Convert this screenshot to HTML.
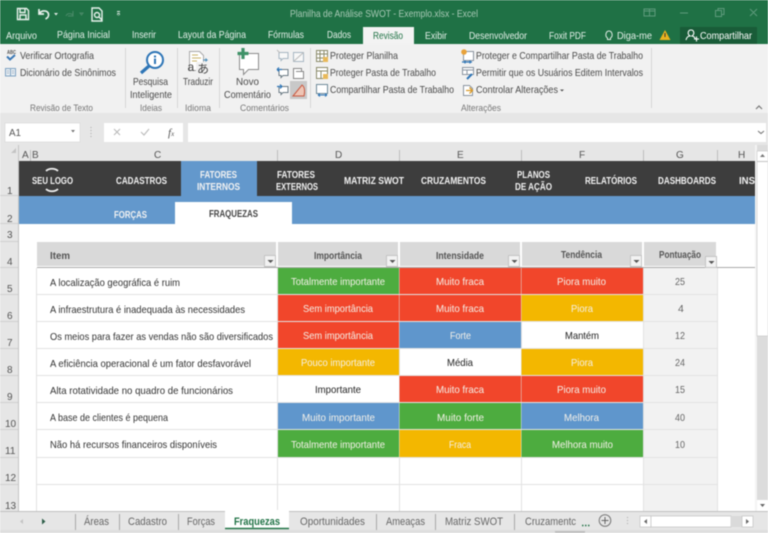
<!DOCTYPE html>
<html lang="pt"><head><meta charset="utf-8"><title>Planilha de Análise SWOT</title>
<style>
html,body{margin:0;padding:0;background:#fff;width:768px;height:533px;overflow:hidden}
svg{display:block;filter:blur(.4px)}
text{font-family:"Liberation Sans",sans-serif;font-size:10px;fill:#444}
.tb text{fill:#e3efe8;font-size:10.5px}
.rb text{fill:#4a4a4a;font-size:10.5px}
.gl text{fill:#777;font-size:9.5px}
.ch text{fill:#555;font-size:10px}
.nv text{fill:#f2f2f2;font-weight:bold;font-size:10px}
.hd text{fill:#555;font-weight:bold;font-size:10px}
.it text{fill:#333;font-size:10.5px}
.w text{fill:#f4f0e8;font-size:10.5px}
.k text{fill:#222;font-size:10.5px}
.n text{fill:#666;font-size:10.5px}
.st text{fill:#666;font-size:11px}
</style></head><body>
<svg xmlns="http://www.w3.org/2000/svg" width="768" height="533" viewBox="0 0 768 533">
<!-- title bar -->
<rect width="768" height="44" fill="#1f7145"/>
<rect x="363" y="27" width="51" height="18" fill="#f3f3f3"/>
<rect x="680" y="27" width="77" height="17" fill="#195c38"/>
<g fill="none" stroke="#e8f1ec" stroke-width="1.4">
<path d="M17.5 8.5h9l2 2v9h-11z"/><path d="M20 9v3.5h5V9M20 19v-4h6v4"/>
<path d="M39 9v5h5M39.500 13.500c2-3.500 8-3.500 9 .5 .5 2-1 4-3 5" stroke-width="1.700"/>
<path d="M92 8h7l3 3v10h-10z"/><circle cx="97" cy="15" r="2.500"/><path d="M99 17l3 3"/>
</g>
<path d="M54 13h4l-2 2.500zM117 11h3v1h-3zM117 14h3v1h-3zM117 13l1.500 3 1.500-3z" fill="#dfeae4"/>
<path d="M66 16c1-3 5-3 7-1M73 11v5h-5M80 13h3l-1.500 2z" fill="none" stroke="#4a8a68" stroke-width="1"/>
<g class="tb">
<text x="290" y="17" textLength="188" lengthAdjust="spacingAndGlyphs" style="fill:#a9c9b6">Planilha de Análise SWOT - Exemplo.xlsx - Excel</text>
<text x="6" y="39" textLength="31" lengthAdjust="spacingAndGlyphs">Arquivo</text>
<text x="57" y="38" textLength="53" lengthAdjust="spacingAndGlyphs">Página Inicial</text>
<text x="132" y="38" textLength="24" lengthAdjust="spacingAndGlyphs">Inserir</text>
<text x="178" y="38" textLength="68" lengthAdjust="spacingAndGlyphs">Layout da Página</text>
<text x="268" y="38" textLength="36" lengthAdjust="spacingAndGlyphs">Fórmulas</text>
<text x="327" y="38" textLength="24" lengthAdjust="spacingAndGlyphs">Dados</text>
<text x="373" y="39" textLength="30" lengthAdjust="spacingAndGlyphs" style="fill:#217346">Revisão</text>
<text x="425" y="39" textLength="22" lengthAdjust="spacingAndGlyphs">Exibir</text>
<text x="469" y="39" textLength="58" lengthAdjust="spacingAndGlyphs">Desenvolvedor</text>
<text x="549" y="39" textLength="37" lengthAdjust="spacingAndGlyphs">Foxit PDF</text>
<text x="617" y="39" textLength="35" lengthAdjust="spacingAndGlyphs">Diga-me</text>
<text x="700" y="39" textLength="52" lengthAdjust="spacingAndGlyphs" style="fill:#fff">Compartilhar</text>
</g>
<path d="M607.500 39.500v-1.500c-3-2-1.500-7 1.500-7s4.500 5 1.500 7v1.500z" fill="none" stroke="#dfeae4"/>
<path d="M665 30l5.500 10h-11z" fill="#eab21e"/><rect x="664.500" y="33" width="1" height="4" fill="#333"/>
<path d="M686 40c1-4 3-4 4-4-3-2-2-6 1-6s4 4 1 6c2 .5 3 1.500 3 3M694 39h5M696.500 36.500v5" fill="none" stroke="#fff" stroke-width="1.100"/>
<g fill="none" stroke="#5e9a7c"><rect x="644" y="9" width="11" height="7"/><path d="M649.500 9v7M644 11h11M680 13h8M715.500 10.500h6v6h-6zM718 10.500v-2h6v6h-2M750 9l7 7M757 9l-7 7"/></g>
<!-- ribbon -->
<rect y="44" width="768" height="70" fill="#f1f1f1"/>
<rect y="113" width="768" height="32" fill="#e6e6e6"/>
<path d="M125.500 48v60M177.500 48v60M219.500 48v60M310.500 48v60M651.500 48v60" stroke="#d6d6d6"/>
<g class="rb">
<text x="20" y="59" textLength="74" lengthAdjust="spacingAndGlyphs">Verificar Ortografia</text>
<text x="20" y="76" textLength="96" lengthAdjust="spacingAndGlyphs">Dicionário de Sinônimos</text>
<text x="133" y="85" textLength="35" lengthAdjust="spacingAndGlyphs">Pesquisa</text>
<text x="130" y="98" textLength="42" lengthAdjust="spacingAndGlyphs">Inteligente</text>
<text x="183" y="85" textLength="30" lengthAdjust="spacingAndGlyphs">Traduzir</text>
<text x="236" y="85" textLength="23" lengthAdjust="spacingAndGlyphs">Novo</text>
<text x="224" y="98" textLength="47" lengthAdjust="spacingAndGlyphs">Comentário</text>
<text x="330" y="59" textLength="68" lengthAdjust="spacingAndGlyphs">Proteger Planilha</text>
<text x="330" y="76" textLength="106" lengthAdjust="spacingAndGlyphs">Proteger Pasta de Trabalho</text>
<text x="330" y="93" textLength="124" lengthAdjust="spacingAndGlyphs">Compartilhar Pasta de Trabalho</text>
<text x="476" y="59" textLength="167" lengthAdjust="spacingAndGlyphs">Proteger e Compartilhar Pasta de Trabalho</text>
<text x="476" y="76" textLength="167" lengthAdjust="spacingAndGlyphs">Permitir que os Usuários Editem Intervalos</text>
<text x="476" y="93" textLength="82" lengthAdjust="spacingAndGlyphs">Controlar Alterações</text>
</g>
<path d="M560 89.500h4l-2 2z" fill="#555"/>
<g class="gl">
<text x="30" y="111" textLength="63" lengthAdjust="spacingAndGlyphs">Revisão de Texto</text>
<text x="140" y="111" textLength="22" lengthAdjust="spacingAndGlyphs">Ideias</text>
<text x="185" y="111" textLength="26" lengthAdjust="spacingAndGlyphs">Idioma</text>
<text x="240" y="111" textLength="49" lengthAdjust="spacingAndGlyphs">Comentários</text>
<text x="461" y="111" textLength="40" lengthAdjust="spacingAndGlyphs">Alterações</text>
</g>
<path d="M756 109l3-3 3 3" fill="none" stroke="#777" stroke-width="1.200"/>
<!-- ribbon icons -->
<text x="7" y="54" textLength="9" lengthAdjust="spacingAndGlyphs" style="font-size:5px;font-weight:bold;fill:#555">ABC</text>
<path d="M7 56.500l3 3 5-4.500" fill="none" stroke="#3b78b5" stroke-width="2"/>
<rect x="5.500" y="68.500" width="10" height="7.500" fill="#e8eef3" stroke="#7fa3c2"/><path d="M10.500 69v7" stroke="#7fa3c2"/><path d="M7 71h2M7 73h2M12 71h2M12 73h2" stroke="#a5b8c8"/>
<circle cx="155" cy="60" r="8" fill="#fff" stroke="#2e75b6" stroke-width="2"/><path d="M149 66l-8 7" stroke="#2e75b6" stroke-width="3.200"/>
<rect x="154" y="58.500" width="2" height="5.500" fill="#2e75b6"/><rect x="154" y="55.500" width="2" height="2" fill="#2e75b6"/>
<path d="M189.500 51.500h10l4 4v15h-14z" fill="#fff" stroke="#a8a8a8"/><path d="M192 55h6M192 58h9M192 61h5" stroke="#c9b26a"/>
<rect x="196" y="62" width="15" height="12" fill="#f1f1f1"/>
<text x="187.500" y="71" style="font-size:12px;fill:#444">a</text><text x="197" y="73" style="font-family:'Noto Sans CJK JP','Liberation Sans',sans-serif;font-size:12px;fill:#444">あ</text>
<path d="M203 60h4l-1.500-1.500M207 60l-1.500 1.500" fill="none" stroke="#4a8db8"/>
<path d="M239.500 53.500h19v16h-10l-5 5v-5h-4z" fill="#fff" stroke="#8c8c8c"/>
<path d="M243 48v11M237.500 53.500h11" stroke="#3f9268" stroke-width="3.200"/>
<g fill="#f8f8f8" stroke="#a6b6c2" stroke-width="1">
<path d="M279 52.500h9v6h-5l-2 2v-2h-2z"/><path d="M293.500 52.500h10v9h-10z"/>
</g>
<path d="M277 50l3 3M293.500 61.500l10-9" stroke="#bbb" fill="none"/>
<path d="M279 69.500h9v6h-5l-2 2v-2h-2z" fill="#fff" stroke="#6c7b85"/><path d="M277 69.500h5M277 69.500l2-2M277 69.500l2 2" stroke="#2e75b6" fill="none" stroke-width="1.200"/>
<path d="M293.500 68.500h8v3h2v7h-10z" fill="#fff" stroke="#888"/><path d="M296 71.500h7" stroke="#888"/>
<path d="M279 86.500h9v6h-5l-2 2v-2h-2z" fill="#fff" stroke="#6c7b85"/><path d="M277 86.500h5M282 86.500l-2-2M282 86.500l-2 2" stroke="#2e75b6" fill="none" stroke-width="1.200"/>
<rect x="290" y="81" width="17" height="18" fill="#c8c8c8"/>
<path d="M293 96l9-11c3 2 3 7 2 11z" fill="#eec5b5" stroke="#c85a42"/>
<g fill="#fff" stroke="#8a8a6a">
<rect x="316.500" y="50.500" width="11" height="11"/><path d="M320 51v10M324 51v10M317 54h10M317 58h10" fill="none"/>
<rect x="316.500" y="67.500" width="11" height="11"/><path d="M317 71h10M321 71v7" fill="none"/>
<rect x="316.500" y="84.500" width="11" height="9" stroke="#6f8a9a"/>
</g>
<rect x="323" y="57" width="5" height="5" fill="#e8b95a"/><rect x="323" y="74" width="5" height="5" fill="#e8b95a"/>
<path d="M318 95h9M318 95l2-1.500M318 95l2 1.500M327 95l-2-1.500M327 95l-2 1.500" stroke="#2e75b6" fill="none"/>
<rect x="463.500" y="51.500" width="10" height="9" fill="#fff" stroke="#8a94a0"/><circle cx="464" cy="52" r="2.800" fill="#e8a23a"/><path d="M462 62h10M465 60.500v3M470 60.500v3" stroke="#2e75b6" stroke-width="1.300"/>
<rect x="462.500" y="67.500" width="11" height="7" fill="#fff" stroke="#8a94a0"/><path d="M463 70h10M467 70v5" stroke="#8a94a0"/><path d="M467 79l5-5" stroke="#2e75b6" stroke-width="2"/>
<path d="M463.500 85.500h6l3 3v7h-9z" fill="#fff" stroke="#8a94a0"/><path d="M466 90.500h6M469.500 87.500l3 3-3 3" fill="none" stroke="#d99a2a" stroke-width="1.300"/>
<!-- formula bar -->
<rect x="5" y="123" width="75" height="19" fill="#fff" stroke="#d0d0d0" stroke-width=".5"/>
<text x="9" y="136" textLength="12" lengthAdjust="spacingAndGlyphs" style="fill:#555;font-size:10.500px">A1</text>
<path d="M71 130h4l-2 2.500z" fill="#777"/>
<path d="M91 127v1M91 130v1M91 133v1M91 136v1" stroke="#aaa"/>
<rect x="104" y="123" width="79" height="19" fill="#fff"/><rect x="188" y="123" width="578" height="19" fill="#fff"/>
<path d="M114 129l6 6M120 129l-6 6" stroke="#bbb" stroke-width="1.100"/><path d="M141 132l3 3 5-6" stroke="#bbb" stroke-width="1.100" fill="none"/>
<text x="168" y="136" style="font-family:'Liberation Serif',serif;font-style:italic;font-size:11px;fill:#555">f<tspan font-size="7">x</tspan></text>
<path d="M758 131l3 2.500 3-2.500" fill="none" stroke="#777" stroke-width="1.100"/>
<!-- sheet -->
<rect y="145" width="768" height="16" fill="#e6e6e6"/>
<rect y="145" width="19" height="388" fill="#e6e6e6"/>
<rect x="19" y="161" width="736" height="350" fill="#fff"/>
<path d="M11 153l5-5v5z" fill="#c4c4c4"/>
<path d="M30.500 150v11M277.500 150v11M399.500 150v11M521.500 150v11M643.500 150v11M717.500 150v11" stroke="#bdbdbd"/>
<g class="ch">
<text x="22" y="158">A</text><text x="32" y="158">B</text>
<text x="154" y="158">C</text><text x="335" y="158">D</text><text x="457" y="158">E</text><text x="579" y="158">F</text><text x="676" y="158">G</text><text x="738" y="158">H</text>
<text x="7" y="194">1</text><text x="7" y="222">2</text><text x="7" y="238">3</text><text x="7" y="265">4</text><text x="7" y="292">5</text><text x="7" y="319">6</text><text x="7" y="346">7</text><text x="7" y="373">8</text><text x="7" y="400">9</text><text x="5" y="427">10</text><text x="5" y="454">11</text><text x="5" y="481">12</text><text x="5" y="509">13</text>
</g>
<path d="M0 195.500h19M0 223.500h19M0 241.500h19M0 267.500h19M0 294.500h19M0 321.500h19M0 348.500h19M0 375.500h19M0 402.500h19M0 429.500h19M0 457.500h19M0 484.500h19" stroke="#cfcfcf"/>
<path d="M18.500 145v366" stroke="#c4c4c4"/>
<!-- nav -->
<rect x="19" y="161" width="736" height="35" fill="#3d3d3d"/>
<rect x="181" y="161" width="76" height="35" fill="#6398cc"/>
<rect x="19" y="196" width="736" height="28" fill="#6398cc"/>
<rect x="175" y="202" width="117" height="22" fill="#fff"/>
<path d="M46 171c3-3 9-3 12 0M46 189c3 3 9 3 12 0" fill="none" stroke="#f0f0f0" stroke-width="1.800"/>
<g class="nv">
<text x="32" y="184" textLength="41" lengthAdjust="spacingAndGlyphs">SEU LOGO</text>
<text x="116" y="184" textLength="51" lengthAdjust="spacingAndGlyphs">CADASTROS</text>
<text x="200" y="178" textLength="37" lengthAdjust="spacingAndGlyphs">FATORES</text>
<text x="197" y="190" textLength="43" lengthAdjust="spacingAndGlyphs">INTERNOS</text>
<text x="277" y="178" textLength="38" lengthAdjust="spacingAndGlyphs">FATORES</text>
<text x="276" y="190" textLength="42" lengthAdjust="spacingAndGlyphs">EXTERNOS</text>
<text x="344" y="184" textLength="60" lengthAdjust="spacingAndGlyphs">MATRIZ SWOT</text>
<text x="421" y="184" textLength="65" lengthAdjust="spacingAndGlyphs">CRUZAMENTOS</text>
<text x="517" y="178" textLength="33" lengthAdjust="spacingAndGlyphs">PLANOS</text>
<text x="515" y="190" textLength="37" lengthAdjust="spacingAndGlyphs">DE AÇÃO</text>
<text x="585" y="184" textLength="52" lengthAdjust="spacingAndGlyphs">RELATÓRIOS</text>
<text x="658" y="184" textLength="58" lengthAdjust="spacingAndGlyphs">DASHBOARDS</text>
<text x="739" y="184" textLength="16" lengthAdjust="spacingAndGlyphs">INS</text>
<text x="114" y="218" textLength="33" lengthAdjust="spacingAndGlyphs">FORÇAS</text>
<text x="209" y="217" textLength="49" lengthAdjust="spacingAndGlyphs" style="fill:#444">FRAQUEZAS</text>
</g>
<!-- table header -->
<g fill="#d9d9d9">
<rect x="37" y="242" width="239" height="24"/><rect x="278" y="242" width="120" height="24"/><rect x="400" y="242" width="120" height="24"/><rect x="522" y="242" width="120" height="24"/><rect x="644" y="242" width="72" height="24"/>
</g>
<path d="M37 267.500h718" stroke="#aaa"/>
<g class="hd">
<text x="50" y="259" textLength="20" lengthAdjust="spacingAndGlyphs">Item</text>
<text x="314" y="259" textLength="48" lengthAdjust="spacingAndGlyphs">Importância</text>
<text x="436" y="259" textLength="48" lengthAdjust="spacingAndGlyphs">Intensidade</text>
<text x="561" y="258" textLength="41" lengthAdjust="spacingAndGlyphs">Tendência</text>
<text x="659" y="258" textLength="42" lengthAdjust="spacingAndGlyphs">Pontuação</text>
</g>
<g fill="#f2f2f2" stroke="#c4c4c4">
<rect x="264.500" y="255.500" width="11" height="11"/><rect x="386.500" y="255.500" width="11" height="11"/><rect x="508.500" y="255.500" width="11" height="11"/><rect x="630.500" y="255.500" width="11" height="11"/><rect x="705.500" y="256.500" width="11" height="11"/>
</g>
<path d="M267.500 260h6l-3 3zM389.500 260h6l-3 3zM511.500 260h6l-3 3zM633.500 260h6l-3 3zM708.500 261h6l-3 3z" fill="#555"/>
<!-- grid -->
<rect x="643.500" y="268" width="73.500" height="243" fill="#f2f2f2"/>
<path d="M37 294.500h680M37 321.500h680M37 348.500h680M37 375.500h680M37 402.500h680M37 429.500h680M37 457.500h680M37 484.500h680M36.500 268v243M277.500 268v243M399.500 268v243M521.500 268v243M643.500 268v243M717.500 268v243" stroke="#e2e2e2" fill="none"/>
<!-- cells -->
<g>
<rect x="278" y="268" width="121" height="26" fill="#4dac3f"/><rect x="399.500" y="268" width="121.500" height="26" fill="#f1462b"/><rect x="521.500" y="268" width="121.500" height="26" fill="#f1462b"/>
<rect x="278" y="295" width="121" height="26" fill="#f1462b"/><rect x="399.500" y="295" width="121.500" height="26" fill="#f1462b"/><rect x="521.500" y="295" width="121.500" height="26" fill="#f3b700"/>
<rect x="278" y="322" width="121" height="26" fill="#f1462b"/><rect x="399.500" y="322" width="121.500" height="26" fill="#5f96cc"/>
<rect x="278" y="349" width="121" height="26" fill="#f3b700"/><rect x="521.500" y="349" width="121.500" height="26" fill="#f3b700"/>
<rect x="399.500" y="376" width="121.500" height="26" fill="#f1462b"/><rect x="521.500" y="376" width="121.500" height="26" fill="#f1462b"/>
<rect x="278" y="403" width="121" height="26" fill="#5f96cc"/><rect x="399.500" y="403" width="121.500" height="26" fill="#4dac3f"/><rect x="521.500" y="403" width="121.500" height="26" fill="#5f96cc"/>
<rect x="278" y="430" width="121" height="27" fill="#4dac3f"/><rect x="399.500" y="430" width="121.500" height="27" fill="#f3b700"/><rect x="521.500" y="430" width="121.500" height="27" fill="#4dac3f"/>
</g>
<g class="it">
<text x="50" y="286" textLength="130" lengthAdjust="spacingAndGlyphs">A localização geográfica é ruim</text>
<text x="50" y="313" textLength="195" lengthAdjust="spacingAndGlyphs">A infraestrutura é inadequada às necessidades</text>
<text x="50" y="340" textLength="223" lengthAdjust="spacingAndGlyphs">Os meios para fazer as vendas não são diversificados</text>
<text x="50" y="367" textLength="201" lengthAdjust="spacingAndGlyphs">A eficiência operacional é um fator desfavorável</text>
<text x="50" y="394" textLength="183" lengthAdjust="spacingAndGlyphs">Alta rotatividade no quadro de funcionários</text>
<text x="50" y="421" textLength="118" lengthAdjust="spacingAndGlyphs">A base de clientes é pequena</text>
<text x="50" y="448" textLength="167" lengthAdjust="spacingAndGlyphs">Não há recursos financeiros disponíveis</text>
</g>
<g class="w">
<text x="291" y="285" textLength="94" lengthAdjust="spacingAndGlyphs">Totalmente importante</text>
<text x="303" y="312" textLength="70" lengthAdjust="spacingAndGlyphs">Sem importância</text>
<text x="303" y="339" textLength="70" lengthAdjust="spacingAndGlyphs">Sem importância</text>
<text x="301" y="366" textLength="74" lengthAdjust="spacingAndGlyphs">Pouco importante</text>
<text x="302" y="421" textLength="73" lengthAdjust="spacingAndGlyphs">Muito importante</text>
<text x="291" y="448" textLength="94" lengthAdjust="spacingAndGlyphs">Totalmente importante</text>
<text x="436" y="285" textLength="48" lengthAdjust="spacingAndGlyphs">Muito fraca</text>
<text x="436" y="312" textLength="48" lengthAdjust="spacingAndGlyphs">Muito fraca</text>
<text x="450" y="339" textLength="21" lengthAdjust="spacingAndGlyphs">Forte</text>
<text x="436" y="393" textLength="48" lengthAdjust="spacingAndGlyphs">Muito fraca</text>
<text x="437" y="421" textLength="47" lengthAdjust="spacingAndGlyphs">Muito forte</text>
<text x="449" y="448" textLength="22" lengthAdjust="spacingAndGlyphs">Fraca</text>
<text x="557" y="285" textLength="49" lengthAdjust="spacingAndGlyphs">Piora muito</text>
<text x="571" y="312" textLength="22" lengthAdjust="spacingAndGlyphs">Piora</text>
<text x="571" y="366" textLength="22" lengthAdjust="spacingAndGlyphs">Piora</text>
<text x="557" y="393" textLength="49" lengthAdjust="spacingAndGlyphs">Piora muito</text>
<text x="564" y="421" textLength="35" lengthAdjust="spacingAndGlyphs">Melhora</text>
<text x="552" y="448" textLength="61" lengthAdjust="spacingAndGlyphs">Melhora muito</text>
</g>
<g class="k">
<text x="315" y="393" textLength="46" lengthAdjust="spacingAndGlyphs">Importante</text>
<text x="447" y="366" textLength="26" lengthAdjust="spacingAndGlyphs">Média</text>
<text x="565" y="339" textLength="34" lengthAdjust="spacingAndGlyphs">Mantém</text>
</g>
<g class="n">
<text x="675" y="285" textLength="10" lengthAdjust="spacingAndGlyphs">25</text>
<text x="678" y="312">4</text>
<text x="675" y="339" textLength="10" lengthAdjust="spacingAndGlyphs">12</text>
<text x="675" y="366" textLength="10" lengthAdjust="spacingAndGlyphs">24</text>
<text x="675" y="393" textLength="10" lengthAdjust="spacingAndGlyphs">15</text>
<text x="675" y="421" textLength="10" lengthAdjust="spacingAndGlyphs">40</text>
<text x="675" y="448" textLength="10" lengthAdjust="spacingAndGlyphs">10</text>
</g>
<!-- vertical scrollbar -->
<rect x="755" y="145" width="13" height="366" fill="#dcdcdc"/>
<rect x="755" y="145" width="2" height="366" fill="#f4f4f4"/>
<rect x="757" y="151" width="11" height="185" fill="#fff" stroke="#c4c4c4" stroke-width=".6"/>
<path d="M757 161.500h11" stroke="#c4c4c4"/>
<path d="M760 157l2.500-3 2.500 3z" fill="#777"/>
<rect x="757" y="500" width="11" height="11" fill="#fff"/><path d="M760 504l2.500 3 2.500-3z" fill="#666"/>
<!-- tabs -->
<rect y="511" width="768" height="19" fill="#e6e6e6"/>
<rect y="530" width="768" height="3" fill="#dedede"/>
<rect x="555" y="531" width="30" height="2" fill="#bdbdbd"/>
<path d="M0 511.500h768" stroke="#c0c0c0"/>
<rect x="225" y="510" width="64" height="18" fill="#fff"/>
<path d="M225 528.500h64" stroke="#217346" stroke-width="1.500"/>
<path d="M75.500 514v16M119.500 514v16M178.500 514v16M376.500 514v16M435.500 514v16M514.500 514v16" stroke="#a8a8a8"/>
<path d="M23 519l-3 2.500 3 2.500z" fill="#c4c4c4"/><path d="M42 518.500l3.500 3-3.500 3z" fill="#2f5f4a"/>
<g class="st">
<text x="84" y="525" textLength="25" lengthAdjust="spacingAndGlyphs">Áreas</text>
<text x="128" y="525" textLength="39" lengthAdjust="spacingAndGlyphs">Cadastro</text>
<text x="187" y="525" textLength="28" lengthAdjust="spacingAndGlyphs">Forças</text>
<text x="234" y="525" textLength="46" lengthAdjust="spacingAndGlyphs" style="font-weight:bold;fill:#217346">Fraquezas</text>
<text x="300" y="525" textLength="65" lengthAdjust="spacingAndGlyphs">Oportunidades</text>
<text x="386" y="525" textLength="39" lengthAdjust="spacingAndGlyphs">Ameaças</text>
<text x="445" y="525" textLength="58" lengthAdjust="spacingAndGlyphs">Matriz SWOT</text>
<text x="525" y="525" textLength="51" lengthAdjust="spacingAndGlyphs">Cruzamentc</text>
</g>
<path d="M582 525.500h1.500M585 525.500h1.500M588 525.500h1.500" stroke="#217346" stroke-width="1.500"/>
<circle cx="605" cy="520.500" r="5.800" fill="none" stroke="#777" stroke-width="1"/><path d="M601.500 520.500h7M605 517v7" stroke="#666"/>
<path d="M627.500 517v1M627.500 520v1M627.500 523v1" stroke="#aaa"/>
<rect x="640" y="516" width="11" height="11" fill="#fff" stroke="#bbb" stroke-width=".6"/><path d="M647 519l-3 2.500 3 2.500z" fill="#666"/>
<rect x="651" y="516" width="80" height="11" fill="#fff" stroke="#bbb" stroke-width=".6"/>
<rect x="731" y="516" width="11" height="11" fill="#dadada"/>
<rect x="742" y="516" width="11" height="11" fill="#fff" stroke="#bbb" stroke-width=".6"/><path d="M746 519l3 2.500-3 2.500z" fill="#666"/>
</svg>
</body></html>
